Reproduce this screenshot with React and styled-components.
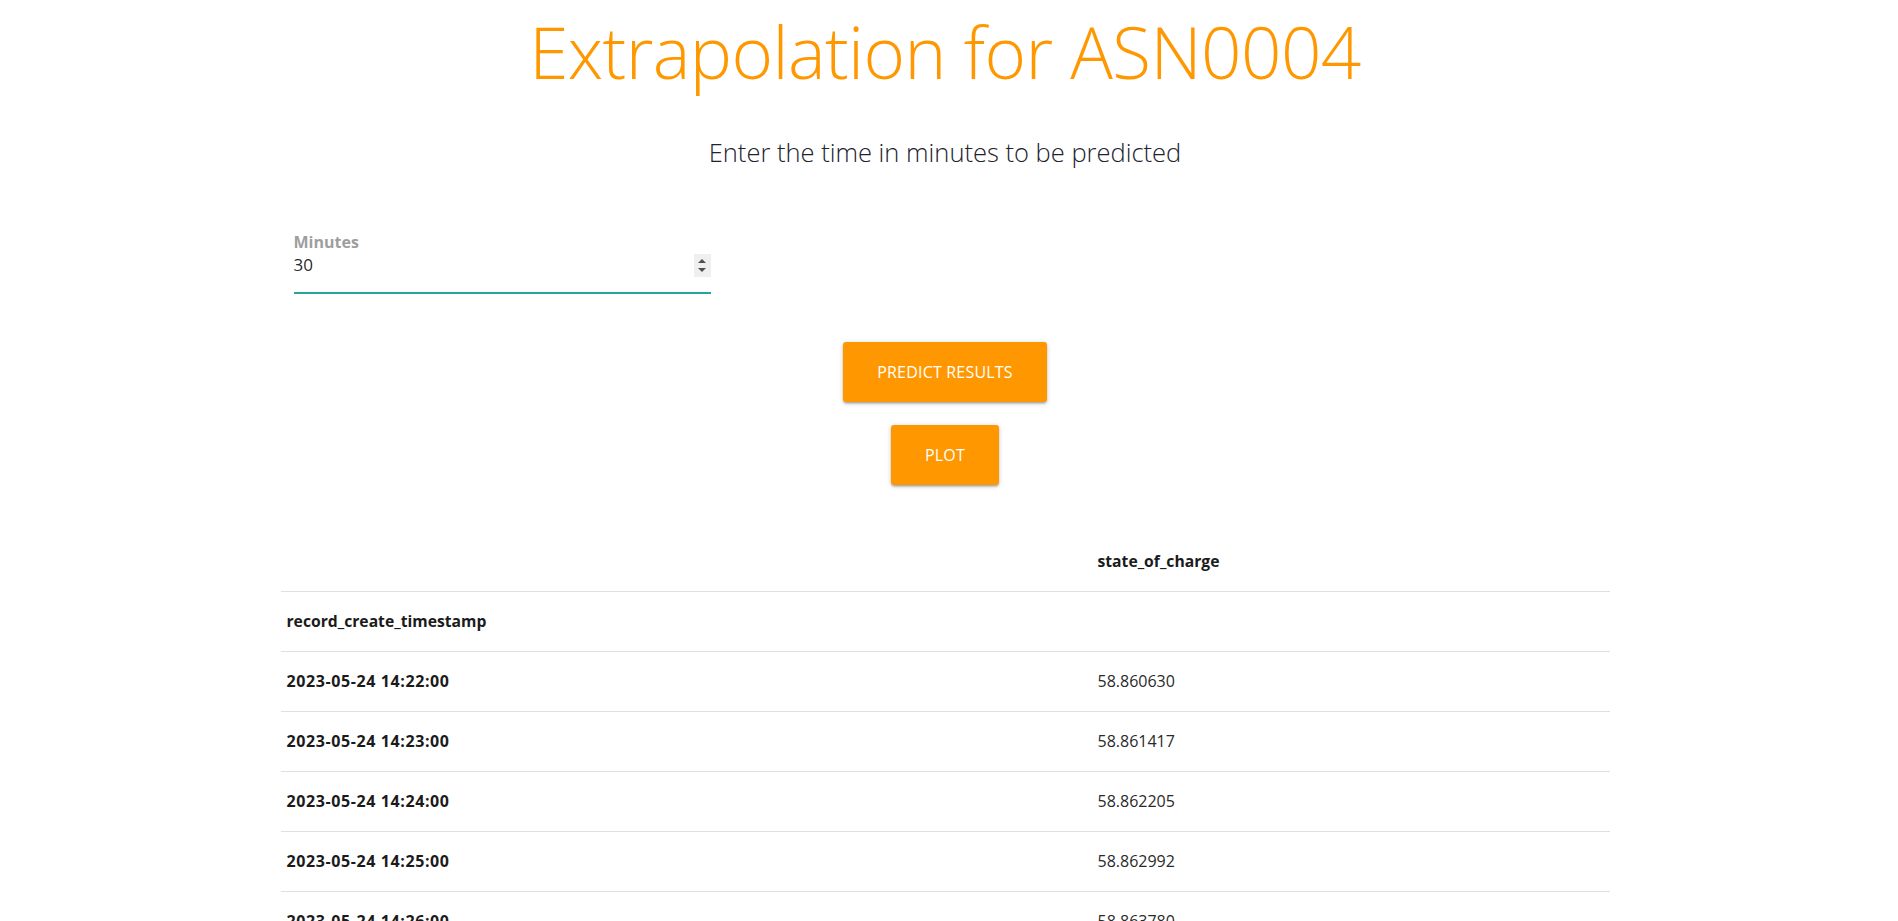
import React, { useState } from 'react'
import styled, { createGlobalStyle } from 'styled-components'

const GlobalStyle = createGlobalStyle`
    html {
        overflow-y: scroll;
    }

    html::-webkit-scrollbar {
        width: 4px;
        background: #f0f0f0;
    }

    html::-webkit-scrollbar-thumb {
        background: linear-gradient(to right, #f0f0f0 50%, #c2c2c2 50%);
    }

    body {
        margin: 0;
        background: #ffffff;
        font-family: 'Open Sans', 'Noto Sans', sans-serif;
        color: rgba(0, 0, 0, 0.87);
    }
`

const startMinute = 22
const firstValue = 58.86063
const step = 0.00078749

const rows = Array.from({ length: 30 }, (_, i) => {
    const minute = startMinute + i
    const hour = 14 + Math.floor(minute / 60)
    const mm = String(minute % 60).padStart(2, '0')
    return {
        time: `2023-05-24 ${hour}:${mm}:00`,
        value: (firstValue + i * step).toFixed(6),
    }
})

const App = () => {
    const [minutes, setMinutes] = useState(30)

    return (
        <Page>
            <GlobalStyle />
            <Title>Extrapolation for ASN0004</Title>
            <Subtitle>Enter the time in minutes to be predicted</Subtitle>

            <Container>
                <Field>
                    <Label htmlFor="minutes">Minutes</Label>
                    <InputLine>
                        <NumberInput
                            id="minutes"
                            type="number"
                            value={minutes}
                            onChange={(e) => setMinutes(e.target.value)}
                        />
                        <Spinner>
                            <SpinArrow onClick={() => setMinutes(Number(minutes) + 1)} />
                            <SpinArrow $down onClick={() => setMinutes(Number(minutes) - 1)} />
                        </Spinner>
                    </InputLine>
                </Field>

                <Actions>
                    <Button>Predict Results</Button>
                    <Button>Plot</Button>
                </Actions>

                <Table>
                    <thead>
                        <tr>
                            <th></th>
                            <th>state_of_charge</th>
                        </tr>
                        <tr>
                            <th>record_create_timestamp</th>
                            <th></th>
                        </tr>
                    </thead>
                    <tbody>
                        {rows.map((row) => (
                            <tr key={row.time}>
                                <th>{row.time}</th>
                                <td>{row.value}</td>
                            </tr>
                        ))}
                    </tbody>
                </Table>
            </Container>
        </Page>
    )
}

export default App

const Page = styled.div`
    padding: 12px 8px 0 0;
`

const Title = styled.h1`
    margin: 0;
    text-align: center;
    font-size: 71px;
    line-height: 79px;
    font-weight: 300;
    letter-spacing: -0.6px;
    color: #ff9800;
`

const Subtitle = styled.h5`
    margin: 46px 0 0;
    text-align: center;
    font-size: 25.5px;
    line-height: 30px;
    font-weight: 300;
    color: #22222e;
`

const Container = styled.div`
    width: 1329px;
    margin: 0 auto;
`

const Field = styled.div`
    width: 417px;
    margin: 65px 0 0 13px;
    display: flex;
    flex-direction: column;
`

const Label = styled.label`
    font-size: 16px;
    line-height: 20px;
    font-weight: 700;
    color: #9e9e9e;
`

const InputLine = styled.div`
    display: flex;
    align-items: flex-start;
    height: 40px;
    border-bottom: 2px solid #26a69a;
`

const NumberInput = styled.input`
    flex: 1;
    min-width: 0;
    height: 24px;
    margin-top: 1px;
    padding: 0;
    border: none;
    outline: none;
    background: transparent;
    font-family: inherit;
    font-size: 17px;
    line-height: 24px;
    color: rgba(0, 0, 0, 0.87);
    -moz-appearance: textfield;

    &::-webkit-outer-spin-button,
    &::-webkit-inner-spin-button {
        -webkit-appearance: none;
        margin: 0;
    }
`

const Spinner = styled.div`
    width: 17px;
    height: 23px;
    margin-top: 2px;
    background: #efefef;
    display: flex;
    flex-direction: column;
    align-items: center;
    justify-content: center;
    gap: 5px;
`

const SpinArrow = styled.span`
    width: 0;
    height: 0;
    border-left: 4px solid transparent;
    border-right: 4px solid transparent;
    ${(p) => (p.$down ? 'border-top: 4px solid #505050;' : 'border-bottom: 4px solid #505050;')}
    cursor: pointer;
`

const Actions = styled.div`
    margin-top: 48px;
    display: flex;
    flex-direction: column;
    align-items: center;
    gap: 23px;
`

const Button = styled.button`
    height: 60px;
    padding: 0 34px;
    border: none;
    border-radius: 3px;
    background: #ff9800;
    color: #ffffff;
    font-family: inherit;
    font-size: 16px;
    letter-spacing: 0.2px;
    text-transform: uppercase;
    box-shadow: 0 2px 2px 0 rgba(0, 0, 0, 0.14), 0 3px 1px -2px rgba(0, 0, 0, 0.12),
        0 1px 5px 0 rgba(0, 0, 0, 0.2);
    cursor: pointer;
`

const Table = styled.table`
    width: 100%;
    margin-top: 46px;
    border-collapse: collapse;
    font-size: 16px;

    tr {
        height: 60px;
        border-bottom: 1px solid rgba(0, 0, 0, 0.12);
    }

    th,
    td {
        padding: 0 6px;
        text-align: left;
        vertical-align: middle;
    }

    th {
        font-weight: 700;
        color: #1b1b1b;
    }

    thead th {
        font-size: 15.7px;
    }

    tbody th {
        letter-spacing: 0.6px;
    }

    th:first-child {
        width: 799px;
    }

    td {
        font-weight: 400;
        color: #2a2a2a;
    }
`
